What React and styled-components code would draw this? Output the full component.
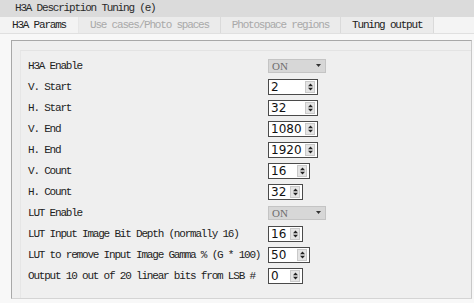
import React from "react";
import styled, { createGlobalStyle } from "styled-components";

const Global = createGlobalStyle`
  html, body { margin: 0; padding: 0; background: #f8f8f8; }
  body { width: 474px; height: 303px; overflow: hidden; }
`;

const MONO = `"Liberation Mono", "DejaVu Sans Mono", monospace`;

const Window = styled.div`
  width: 474px;
  height: 303px;
  display: flex;
  flex-direction: column;
  background: #f8f8f8;
  font-family: ${MONO};
  font-size: 11px;
  letter-spacing: -1.2px;
  color: #222;
`;

const TitleBar = styled.div`
  height: 17px;
  line-height: 17px;
  padding-left: 15px;
  background: #dbdbdb;
  color: #2a2a2a;
  white-space: nowrap;
`;

const TabBar = styled.div`
  height: 16px;
  display: flex;
  background: #f4f4f4;
  border-bottom: 1px solid #e0e0e0;
`;

const Tab = styled.div`
  height: 16px;
  line-height: 16px;
  padding: 0 ${(p) => (p.$first ? 12 : 11)}px;
  background: ${(p) => (p.$active ? "#f3f3f3" : "#ebebeb")};
  color: ${(p) => (p.$disabled ? "#a9a9a9" : "#222")};
  border-right: 1px solid ${(p) => (p.$active ? "#e6e6e6" : "#dadada")};
  white-space: nowrap;
`;

const Frame = styled.div`
  margin: 6px 2px 4px 11px;
  flex: 1;
  border-top: 1px solid #a8a8a8;
  border-left: 1px solid #a8a8a8;
  border-right: 1px solid #c8c8c8;
  border-bottom: 1px solid #d4d4d4;
  background: #efefef;
  display: flex;
  padding: 9px 0 0 8px;
`;

const Panel = styled.div`
  flex: 1;
  border-top: 1px solid #e3e3e3;
  border-left: 1px solid #e6e6e6;
  padding: 4px 0 0 7px;
  display: grid;
  grid-template-columns: 240px 1fr;
  grid-auto-rows: 21px;
  align-content: start;
`;

const Label = styled.div`
  display: flex;
  align-items: center;
  white-space: nowrap;
  color: #222;
`;

const Cell = styled.div`
  display: flex;
  align-items: center;
`;

const Combo = styled.div`
  width: 49px;
  height: 12px;
  border: 1px solid #c4c4c4;
  background: #d7d7d7;
  display: flex;
  align-items: center;
  justify-content: space-between;
  padding: 0 4px 0 3px;
  font-family: "Liberation Serif", serif;
  font-size: 11px;
  letter-spacing: 0;
  color: #6e6e6e;
  box-sizing: content-box;
`;

const Spin = styled.div`
  width: ${(p) => p.$w}px;
  height: 16px;
  box-sizing: border-box;
  border: 1px solid #4a4a4a;
  background: #fff;
  display: flex;
  align-items: stretch;
`;

const SpinText = styled.div`
  flex: 1;
  padding-left: 2px;
  font-family: "DejaVu Sans", sans-serif;
  font-size: 12px;
  letter-spacing: 0;
  line-height: 14px;
  color: #111;
`;

const SpinButtons = styled.div`
  width: 8px;
  margin: 1px 2px 1px 0;
  background: #e4e4e4;
  border: 1px solid #c9c9c9;
  display: flex;
  align-items: center;
  justify-content: center;
`;

const Arrows = () => (
  <svg width="5" height="8" viewBox="0 0 5 8">
    <path d="M2.5 0.5 L5 3.2 L0 3.2 Z" fill="#222" />
    <path d="M0 4.8 L5 4.8 L2.5 7.5 Z" fill="#222" />
  </svg>
);

const Caret = () => (
  <svg width="5" height="3" viewBox="0 0 5 3">
    <path d="M0 0 L5 0 L2.5 3 Z" fill="#333" />
  </svg>
);

const rows = [
  { label: "H3A Enable", combo: "ON" },
  { label: "V. Start", value: "2", w: 50 },
  { label: "H. Start", value: "32", w: 50 },
  { label: "V. End", value: "1080", w: 50 },
  { label: "H. End", value: "1920", w: 50 },
  { label: "V. Count", value: "16", w: 42 },
  { label: "H. Count", value: "32", w: 35 },
  { label: "LUT Enable", combo: "ON" },
  { label: "LUT Input Image Bit Depth (normally 16)", value: "16", w: 35 },
  { label: "LUT to remove Input Image Gamma % (G * 100)", value: "50", w: 42 },
  { label: "Output 10 out of 20 linear bits from LSB #", value: "0", w: 35 },
];

const tabs = [
  { name: "H3A Params", active: true, first: true },
  { name: "Use cases/Photo spaces", disabled: true },
  { name: "Photospace regions", disabled: true },
  { name: "Tuning output" },
];

export default function App() {
  return (
    <>
      <Global />
      <Window>
        <TitleBar>H3A Description Tuning (e)</TitleBar>
        <TabBar>
          {tabs.map((t) => (
            <Tab key={t.name} $active={t.active} $disabled={t.disabled} $first={t.first}>
              {t.name}
            </Tab>
          ))}
        </TabBar>
        <Frame>
          <Panel>
            {rows.map((r) => (
              <React.Fragment key={r.label}>
                <Label>{r.label}</Label>
                <Cell>
                  {r.combo ? (
                    <Combo>
                      <span>{r.combo}</span>
                      <Caret />
                    </Combo>
                  ) : (
                    <Spin $w={r.w}>
                      <SpinText>{r.value}</SpinText>
                      <SpinButtons>
                        <Arrows />
                      </SpinButtons>
                    </Spin>
                  )}
                </Cell>
              </React.Fragment>
            ))}
          </Panel>
        </Frame>
      </Window>
    </>
  );
}
